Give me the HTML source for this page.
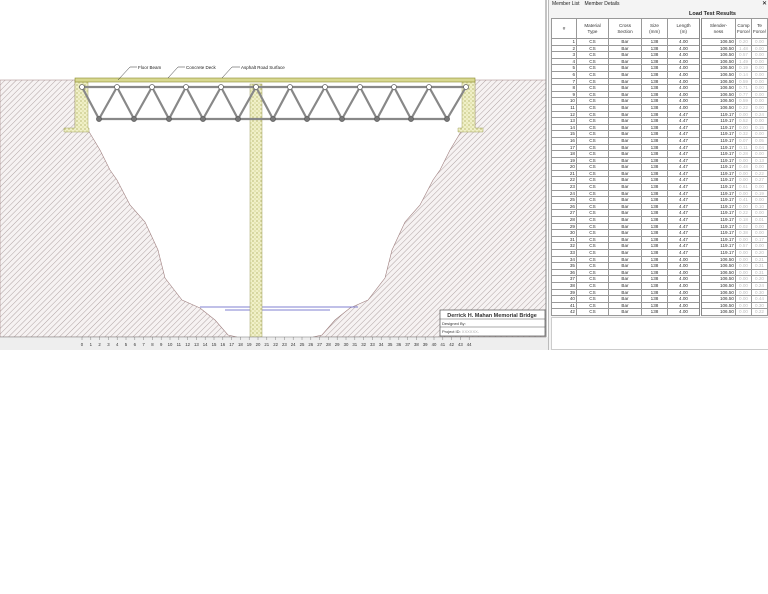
<!DOCTYPE html>
<html><head><meta charset="utf-8"><style>
body{margin:0;width:768px;height:594px;background:#fff;overflow:hidden;font-family:"Liberation Sans",sans-serif;position:relative}
#draw{position:absolute;left:0;top:0}
#panel{position:absolute;left:548px;top:0;width:220px;height:350px;background:#f4f4f4;border-left:1px solid #bbb}
.tabs{position:absolute;left:3px;top:1px;font-size:5px;color:#222}
.tabs span{margin-right:5px}
.title{position:absolute;left:140px;top:11px;font-size:5.5px;font-weight:bold;color:#222}
.x{position:absolute;right:2px;top:0;font-size:6px}
table{position:absolute;left:2px;top:18px;border-collapse:collapse;table-layout:fixed;background:#fff;font-size:4.6px;color:#333}
td,th{border:1px solid #999;padding:0;height:5.6px;line-height:5.6px;text-align:center;overflow:hidden;white-space:nowrap}
th{font-weight:normal;height:19px;line-height:6px;background:#fff}
td.r{text-align:right;padding-right:1px}
td.g{color:#bbb}
.dbl{border-right:3px double #888}
.blank{position:absolute;left:2px;top:317px;width:216px;height:31px;background:#fff;border:1px solid #ccc}
</style></head><body>
<svg id="draw" width="548" height="350" viewBox="0 0 548 350">
<defs>
<pattern id="h" width="4" height="4" patternUnits="userSpaceOnUse" patternTransform="rotate(45)">
<rect width="4" height="4" fill="#f6f2f2"/><line x1="0" y1="0" x2="0" y2="4" stroke="#b0a4a4" stroke-width="1"/></pattern>
<pattern id="c" width="4" height="4" patternUnits="userSpaceOnUse"><rect width="4" height="4" fill="#f0f0c8"/><circle cx="1" cy="1" r=".6" fill="#9a9a40"/><circle cx="3" cy="3" r=".5" fill="#b0b050"/></pattern>
</defs>
<rect width="548" height="337" fill="#fff"/>
<polygon fill="url(#h)" stroke="#a08080" stroke-width=".6" points="0,80 75,80 75,128 88,130 100,150 110,170 117,180 130,205 145,222 158,250 165,278 182,300 200,308 215,320 228,335 237,337 0,337"/>
<polygon fill="url(#h)" stroke="#a08080" stroke-width=".6" points="546,80 475,80 475,128 462,130 450,150 440,170 433,180 420,205 405,222 392,250 385,278 368,300 350,308 335,320 322,335 313,337 546,337"/>
<line x1="546" y1="0" x2="546" y2="337" stroke="#888"/>
<!-- water -->
<line x1="200" y1="307" x2="358" y2="307" stroke="#8080d0" stroke-width="1"/>
<line x1="225" y1="310" x2="330" y2="310" stroke="#8080d0" stroke-width="1"/>
<!-- abutments and pier -->
<path d="M75,82 H88 V128 H89 V132 H64 V128 H75 Z" fill="url(#c)" stroke="#a0a060" stroke-width=".5"/>
<path d="M462,82 H475 V128 H483 V132 H458 V128 H462 Z" fill="url(#c)" stroke="#a0a060" stroke-width=".5"/>
<rect x="250" y="84" width="12" height="253" fill="url(#c)" stroke="#a0a060" stroke-width=".5"/>
<!-- deck -->
<rect x="75" y="78" width="400" height="4" fill="#d8d890" stroke="#8a8a30" stroke-width=".6"/>
<!-- truss -->
<g stroke="#888" stroke-width="2.2" fill="none">
<line x1="82" y1="87" x2="466" y2="87"/>
<line x1="99" y1="119" x2="447" y2="119"/>
<polyline points="82,87 99,119 117,87 134,119 152,87 169,119 186,87 203,119 221,87 238,119 256,87 273,119 290,87 307,119 325,87 342,119 360,87 377,119 394,87 411,119 429,87 447,119 466,87"/>
</g>
<g fill="#fff" stroke="#666" stroke-width=".8">
<circle cx="82" cy="87" r="2.5"/><circle cx="117" cy="87" r="2.5"/><circle cx="152" cy="87" r="2.5"/><circle cx="186" cy="87" r="2.5"/><circle cx="221" cy="87" r="2.5"/><circle cx="256" cy="87" r="2.5"/><circle cx="290" cy="87" r="2.5"/><circle cx="325" cy="87" r="2.5"/><circle cx="360" cy="87" r="2.5"/><circle cx="394" cy="87" r="2.5"/><circle cx="429" cy="87" r="2.5"/><circle cx="466" cy="87" r="2.5"/>
</g>
<g fill="#777" stroke="#555" stroke-width=".6">
<circle cx="99" cy="119" r="2.6"/><circle cx="134" cy="119" r="2.6"/><circle cx="169" cy="119" r="2.6"/><circle cx="203" cy="119" r="2.6"/><circle cx="238" cy="119" r="2.6"/><circle cx="273" cy="119" r="2.6"/><circle cx="307" cy="119" r="2.6"/><circle cx="342" cy="119" r="2.6"/><circle cx="377" cy="119" r="2.6"/><circle cx="411" cy="119" r="2.6"/><circle cx="447" cy="119" r="2.6"/>
</g>
<!-- labels -->
<g stroke="#333" stroke-width=".5" fill="none">
<path d="M118,80 L130,67 H137"/><path d="M168,78 L178,67 H185"/><path d="M222,78 L232,67 H240"/>
</g>
<g font-size="4.5" fill="#222">
<text x="138" y="69">Floor Beam</text><text x="186" y="69">Concrete Deck</text><text x="241" y="69">Asphalt Road Surface</text>
</g>
<!-- title block -->
<rect x="440" y="310" width="105" height="26" fill="#fff" stroke="#555" stroke-width=".7"/>
<line x1="440" y1="319" x2="545" y2="319" stroke="#555" stroke-width=".5"/>
<line x1="440" y1="327" x2="545" y2="327" stroke="#555" stroke-width=".5"/>
<text x="492" y="317" font-size="5.5" text-anchor="middle" fill="#333" font-weight="bold">Derrick H. Mahan Memorial Bridge</text>
<text x="442" y="325" font-size="4" fill="#333">Designed By:</text>
<text x="442" y="333" font-size="4" fill="#333">Project ID: <tspan fill="#aaa">XXXXXX-</tspan></text>
<!-- ruler -->
<rect x="0" y="337" width="548" height="13" fill="#eeeeee"/>
<line x1="0" y1="337" x2="546" y2="337" stroke="#777" stroke-width=".6"/>
<g font-size="4.3" fill="#333" text-anchor="middle">
<text x="82" y="346">0</text><text x="90.8" y="346">1</text><text x="99.6" y="346">2</text><text x="108.4" y="346">3</text><text x="117.2" y="346">4</text><text x="126" y="346">5</text><text x="134.8" y="346">6</text><text x="143.6" y="346">7</text><text x="152.4" y="346">8</text><text x="161.2" y="346">9</text><text x="170" y="346">10</text><text x="178.8" y="346">11</text><text x="187.6" y="346">12</text><text x="196.4" y="346">13</text><text x="205.2" y="346">14</text><text x="214" y="346">15</text><text x="222.8" y="346">16</text><text x="231.6" y="346">17</text><text x="240.4" y="346">18</text><text x="249.2" y="346">19</text><text x="258" y="346">20</text><text x="266.8" y="346">21</text><text x="275.6" y="346">22</text><text x="284.4" y="346">23</text><text x="293.2" y="346">24</text><text x="302" y="346">25</text><text x="310.8" y="346">26</text><text x="319.6" y="346">27</text><text x="328.4" y="346">28</text><text x="337.2" y="346">29</text><text x="346" y="346">30</text><text x="354.8" y="346">31</text><text x="363.6" y="346">32</text><text x="372.4" y="346">33</text><text x="381.2" y="346">34</text><text x="390" y="346">35</text><text x="398.8" y="346">36</text><text x="407.6" y="346">37</text><text x="416.4" y="346">38</text><text x="425.2" y="346">39</text><text x="434" y="346">40</text><text x="442.8" y="346">41</text><text x="451.6" y="346">42</text><text x="460.4" y="346">43</text><text x="469.2" y="346">44</text>
</g>
<g stroke="#666" stroke-width=".4">
<path d="M82,337v3M90.8,337v3M99.6,337v3M108.4,337v3M117.2,337v3M126,337v3M134.8,337v3M143.6,337v3M152.4,337v3M161.2,337v3M170,337v3M178.8,337v3M187.6,337v3M196.4,337v3M205.2,337v3M214,337v3M222.8,337v3M231.6,337v3M240.4,337v3M249.2,337v3M258,337v3M266.8,337v3M275.6,337v3M284.4,337v3M293.2,337v3M302,337v3M310.8,337v3M319.6,337v3M328.4,337v3M337.2,337v3M346,337v3M354.8,337v3M363.6,337v3M372.4,337v3M381.2,337v3M390,337v3M398.8,337v3M407.6,337v3M416.4,337v3M425.2,337v3M434,337v3M442.8,337v3M451.6,337v3M460.4,337v3M469.2,337v3"/>
</g>
</svg>
<div id="panel">
<div class="tabs"><span>Member List</span><span>Member Details</span></div>
<div class="x">✕</div>
<div class="title">Load Test Results</div>
<table>
<colgroup><col style="width:25px"><col style="width:32px"><col style="width:33px"><col style="width:26px"><col style="width:33px"><col style="width:35px"><col style="width:16px"><col style="width:16px"></colgroup>
<tr><th>#</th><th>Material<br>Type</th><th>Cross<br>Section</th><th>Size<br>(mm)</th><th class="dbl">Length<br>(m)</th><th>Slender-<br>ness</th><th>Comp<br>Force/</th><th>Te<br>Force/</th></tr>
<tr><td class="r">1</td><td>CS</td><td>Bar</td><td>138</td><td class="dbl">4.00</td><td class="r">106.50</td><td class="g">0.20</td><td class="g">0.00</td></tr>
<tr><td class="r">2</td><td>CS</td><td>Bar</td><td>138</td><td class="dbl">4.00</td><td class="r">106.50</td><td class="g">1.48</td><td class="g">0.00</td></tr>
<tr><td class="r">3</td><td>CS</td><td>Bar</td><td>138</td><td class="dbl">4.00</td><td class="r">106.50</td><td class="g">0.57</td><td class="g">0.00</td></tr>
<tr><td class="r">4</td><td>CS</td><td>Bar</td><td>138</td><td class="dbl">4.00</td><td class="r">106.50</td><td class="g">1.49</td><td class="g">0.00</td></tr>
<tr><td class="r">5</td><td>CS</td><td>Bar</td><td>138</td><td class="dbl">4.00</td><td class="r">106.50</td><td class="g">0.19</td><td class="g">0.00</td></tr>
<tr><td class="r">6</td><td>CS</td><td>Bar</td><td>138</td><td class="dbl">4.00</td><td class="r">106.50</td><td class="g">0.14</td><td class="g">0.00</td></tr>
<tr><td class="r">7</td><td>CS</td><td>Bar</td><td>138</td><td class="dbl">4.00</td><td class="r">106.50</td><td class="g">0.59</td><td class="g">0.00</td></tr>
<tr><td class="r">8</td><td>CS</td><td>Bar</td><td>138</td><td class="dbl">4.00</td><td class="r">106.50</td><td class="g">0.71</td><td class="g">0.00</td></tr>
<tr><td class="r">9</td><td>CS</td><td>Bar</td><td>138</td><td class="dbl">4.00</td><td class="r">106.50</td><td class="g">0.77</td><td class="g">0.00</td></tr>
<tr><td class="r">10</td><td>CS</td><td>Bar</td><td>138</td><td class="dbl">4.00</td><td class="r">106.50</td><td class="g">0.59</td><td class="g">0.00</td></tr>
<tr><td class="r">11</td><td>CS</td><td>Bar</td><td>138</td><td class="dbl">4.00</td><td class="r">106.50</td><td class="g">0.22</td><td class="g">0.00</td></tr>
<tr><td class="r">12</td><td>CS</td><td>Bar</td><td>138</td><td class="dbl">4.47</td><td class="r">119.17</td><td class="g">0.00</td><td class="g">0.24</td></tr>
<tr><td class="r">13</td><td>CS</td><td>Bar</td><td>138</td><td class="dbl">4.47</td><td class="r">119.17</td><td class="g">0.52</td><td class="g">0.00</td></tr>
<tr><td class="r">14</td><td>CS</td><td>Bar</td><td>138</td><td class="dbl">4.47</td><td class="r">119.17</td><td class="g">0.00</td><td class="g">0.15</td></tr>
<tr><td class="r">15</td><td>CS</td><td>Bar</td><td>138</td><td class="dbl">4.47</td><td class="r">119.17</td><td class="g">0.32</td><td class="g">0.00</td></tr>
<tr><td class="r">16</td><td>CS</td><td>Bar</td><td>138</td><td class="dbl">4.47</td><td class="r">119.17</td><td class="g">0.07</td><td class="g">0.05</td></tr>
<tr><td class="r">17</td><td>CS</td><td>Bar</td><td>138</td><td class="dbl">4.47</td><td class="r">119.17</td><td class="g">0.11</td><td class="g">0.04</td></tr>
<tr><td class="r">18</td><td>CS</td><td>Bar</td><td>138</td><td class="dbl">4.47</td><td class="r">119.17</td><td class="g">0.28</td><td class="g">0.00</td></tr>
<tr><td class="r">19</td><td>CS</td><td>Bar</td><td>138</td><td class="dbl">4.47</td><td class="r">119.17</td><td class="g">0.00</td><td class="g">0.13</td></tr>
<tr><td class="r">20</td><td>CS</td><td>Bar</td><td>138</td><td class="dbl">4.47</td><td class="r">119.17</td><td class="g">0.48</td><td class="g">0.00</td></tr>
<tr><td class="r">21</td><td>CS</td><td>Bar</td><td>138</td><td class="dbl">4.47</td><td class="r">119.17</td><td class="g">0.00</td><td class="g">0.22</td></tr>
<tr><td class="r">22</td><td>CS</td><td>Bar</td><td>138</td><td class="dbl">4.47</td><td class="r">119.17</td><td class="g">0.00</td><td class="g">0.27</td></tr>
<tr><td class="r">23</td><td>CS</td><td>Bar</td><td>138</td><td class="dbl">4.47</td><td class="r">119.17</td><td class="g">0.61</td><td class="g">0.00</td></tr>
<tr><td class="r">24</td><td>CS</td><td>Bar</td><td>138</td><td class="dbl">4.47</td><td class="r">119.17</td><td class="g">0.00</td><td class="g">0.19</td></tr>
<tr><td class="r">25</td><td>CS</td><td>Bar</td><td>138</td><td class="dbl">4.47</td><td class="r">119.17</td><td class="g">0.41</td><td class="g">0.00</td></tr>
<tr><td class="r">26</td><td>CS</td><td>Bar</td><td>138</td><td class="dbl">4.47</td><td class="r">119.17</td><td class="g">0.00</td><td class="g">0.10</td></tr>
<tr><td class="r">27</td><td>CS</td><td>Bar</td><td>138</td><td class="dbl">4.47</td><td class="r">119.17</td><td class="g">0.22</td><td class="g">0.00</td></tr>
<tr><td class="r">28</td><td>CS</td><td>Bar</td><td>138</td><td class="dbl">4.47</td><td class="r">119.17</td><td class="g">0.18</td><td class="g">0.01</td></tr>
<tr><td class="r">29</td><td>CS</td><td>Bar</td><td>138</td><td class="dbl">4.47</td><td class="r">119.17</td><td class="g">0.02</td><td class="g">0.00</td></tr>
<tr><td class="r">30</td><td>CS</td><td>Bar</td><td>138</td><td class="dbl">4.47</td><td class="r">119.17</td><td class="g">0.38</td><td class="g">0.00</td></tr>
<tr><td class="r">31</td><td>CS</td><td>Bar</td><td>138</td><td class="dbl">4.47</td><td class="r">119.17</td><td class="g">0.00</td><td class="g">0.17</td></tr>
<tr><td class="r">32</td><td>CS</td><td>Bar</td><td>138</td><td class="dbl">4.47</td><td class="r">119.17</td><td class="g">0.57</td><td class="g">0.00</td></tr>
<tr><td class="r">33</td><td>CS</td><td>Bar</td><td>138</td><td class="dbl">4.47</td><td class="r">119.17</td><td class="g">0.00</td><td class="g">0.20</td></tr>
<tr><td class="r">34</td><td>CS</td><td>Bar</td><td>138</td><td class="dbl">4.00</td><td class="r">106.50</td><td class="g">0.00</td><td class="g">0.21</td></tr>
<tr><td class="r">35</td><td>CS</td><td>Bar</td><td>138</td><td class="dbl">4.00</td><td class="r">106.50</td><td class="g">0.00</td><td class="g">0.31</td></tr>
<tr><td class="r">36</td><td>CS</td><td>Bar</td><td>138</td><td class="dbl">4.00</td><td class="r">106.50</td><td class="g">0.00</td><td class="g">0.31</td></tr>
<tr><td class="r">37</td><td>CS</td><td>Bar</td><td>138</td><td class="dbl">4.00</td><td class="r">106.50</td><td class="g">0.00</td><td class="g">0.20</td></tr>
<tr><td class="r">38</td><td>CS</td><td>Bar</td><td>138</td><td class="dbl">4.00</td><td class="r">106.50</td><td class="g">0.00</td><td class="g">0.24</td></tr>
<tr><td class="r">39</td><td>CS</td><td>Bar</td><td>138</td><td class="dbl">4.00</td><td class="r">106.50</td><td class="g">0.00</td><td class="g">0.30</td></tr>
<tr><td class="r">40</td><td>CS</td><td>Bar</td><td>138</td><td class="dbl">4.00</td><td class="r">106.50</td><td class="g">0.00</td><td class="g">0.44</td></tr>
<tr><td class="r">41</td><td>CS</td><td>Bar</td><td>138</td><td class="dbl">4.00</td><td class="r">106.50</td><td class="g">0.00</td><td class="g">0.30</td></tr>
<tr><td class="r">42</td><td>CS</td><td>Bar</td><td>138</td><td class="dbl">4.00</td><td class="r">106.50</td><td class="g">0.00</td><td class="g">0.22</td></tr>
</table>
<div class="blank"></div>
</div>
</body></html>
